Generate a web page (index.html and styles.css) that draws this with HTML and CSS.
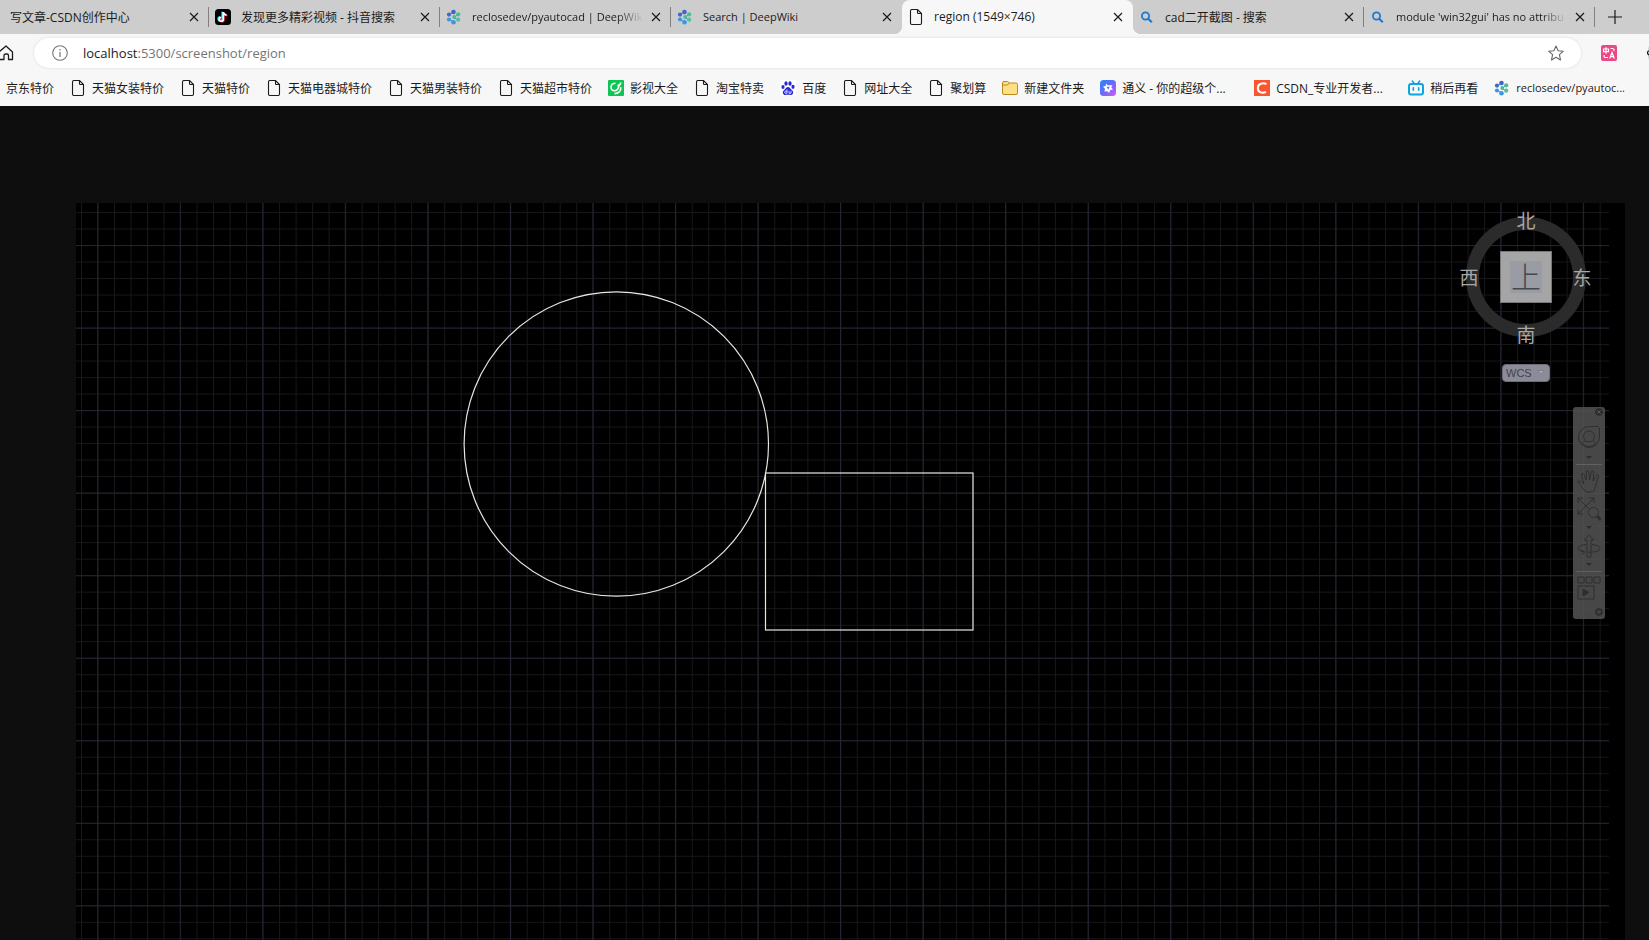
FILE: index.html
```
<!DOCTYPE html>
<html lang="zh-CN">
<head>
    <meta charset="UTF-8">
    <meta name="viewport" content="width=device-width, initial-scale=1.0">
    <title>region (1549×746)</title>
    <link rel="stylesheet" href="styles.css">
</head>
<body>

<!-- shared icons -->
<svg class="defs" width="0" height="0" aria-hidden="true">
    <symbol id="i-doc" viewBox="0 0 16 16">
        <path d="M4 .5h5.500l4 4v9.500a1.500 1.500 0 0 1-1.500 1.500H4A1.500 1.500 0 0 1 2.500 14V2A1.500 1.500 0 0 1 4 .5zM9.500.5v3.200a.8.800 0 0 0 .8.800h3.200" fill="none" stroke="#1b1b1b" stroke-width="1.100"/>
    </symbol>
    <symbol id="i-close" viewBox="0 0 10 10">
        <path d="M1 1l8 8M9 1l-8 8" stroke="#1b1b1b" stroke-width="1.200"/>
    </symbol>
    <symbol id="i-wiki" viewBox="0 0 16 16">
        <path d="M3.500 5.500l4-2.500M12 5.500l-4 3M4 11l4 2M12 11L8 8.500" stroke="#4a8fc8" stroke-width="1"/>
        <circle cx="7.500" cy="3" r="2.300" fill="#3f66c4"/>
        <circle cx="3" cy="5.600" r="2.100" fill="#4467c8"/>
        <circle cx="12.200" cy="5.300" r="2.100" fill="#4bbd92"/>
        <circle cx="8.200" cy="8" r="1.900" fill="#4db89c"/>
        <circle cx="3" cy="10.500" r="2.100" fill="#3f96dc"/>
        <circle cx="12.200" cy="10.700" r="2.100" fill="#57bfa0"/>
        <circle cx="7.500" cy="13.200" r="2.300" fill="#3f96dc"/>
    </symbol>
    <symbol id="i-search" viewBox="0 0 16 16">
        <circle cx="6.500" cy="7" r="3.600" fill="none" stroke="#1f78d1" stroke-width="1.800"/>
        <path d="M9.200 9.700l3.600 3.600" stroke="#1f78d1" stroke-width="2.200"/>
    </symbol>
</svg>

<header class="browser">
    <div class="tabs">
        <div class="tab tab-first">
            <span class="tab-title">写文章-CSDN创作中心</span>
            <button class="tab-close" aria-label="关闭"><svg><use href="#i-close"/></svg></button>
        </div>
        <div class="tab">
            <svg class="icon" viewBox="0 0 16 16">
                <rect width="16" height="16" rx="3.500" fill="#000"/>
                <path d="M7.700 3v7.200a2 2 0 1 1-2-2M7.700 3.200c.3 1.700 1.600 2.700 3.300 2.800" transform="translate(-.5 -.3)" fill="none" stroke="#25f4ee" stroke-width="1.600"/>
                <path d="M8.700 3v7.200a2 2 0 1 1-2-2M8.700 3.200c.3 1.700 1.600 2.700 3.300 2.800" transform="translate(.3 .6)" fill="none" stroke="#fe2c55" stroke-width="1.600"/>
                <path d="M8.300 3v7.200a2 2 0 1 1-2-2M8.300 3.200c.3 1.700 1.600 2.700 3.300 2.800" fill="none" stroke="#fff" stroke-width="1.600"/>
            </svg>
            <span class="tab-title">发现更多精彩视频 - 抖音搜索</span>
            <button class="tab-close" aria-label="关闭"><svg><use href="#i-close"/></svg></button>
        </div>
        <div class="tab">
            <svg class="icon"><use href="#i-wiki"/></svg>
            <span class="tab-title latin fade">reclosedev/pyautocad | DeepWiki</span>
            <button class="tab-close" aria-label="关闭"><svg><use href="#i-close"/></svg></button>
        </div>
        <div class="tab no-line">
            <svg class="icon"><use href="#i-wiki"/></svg>
            <span class="tab-title latin">Search | DeepWiki</span>
            <button class="tab-close" aria-label="关闭"><svg><use href="#i-close"/></svg></button>
        </div>
        <div class="tab active">
            <svg class="icon"><use href="#i-doc"/></svg>
            <span class="tab-title">region (1549×746)</span>
            <button class="tab-close" aria-label="关闭"><svg><use href="#i-close"/></svg></button>
        </div>
        <div class="tab">
            <svg class="icon"><use href="#i-search"/></svg>
            <span class="tab-title">cad二开截图 - 搜索</span>
            <button class="tab-close" aria-label="关闭"><svg><use href="#i-close"/></svg></button>
        </div>
        <div class="tab">
            <svg class="icon"><use href="#i-search"/></svg>
            <span class="tab-title latin fade">module 'win32gui' has no attribu</span>
            <button class="tab-close" aria-label="关闭"><svg><use href="#i-close"/></svg></button>
        </div>
        <button class="new-tab" aria-label="新建标签页">
            <svg viewBox="0 0 14 14"><path d="M7 0v14M0 7h14" stroke="#1b1b1b" stroke-width="1.200"/></svg>
        </button>
    </div>

    <div class="toolbar">
        <button class="home" aria-label="主页">
            <svg viewBox="0 0 14 16"><path d="M-1.500 7.500L6 1l6.500 6v7.500h-4v-4a1.500 1.500 0 0 0-1.500-1.500H5.500A1.500 1.500 0 0 0 4 10.500v4H-.5" fill="none" stroke="#1b1b1b" stroke-width="1.300" stroke-linejoin="round"/></svg>
        </button>
        <div class="address">
            <svg class="icon" viewBox="0 0 16 16">
                <circle cx="8" cy="8" r="7.300" fill="none" stroke="#757575" stroke-width="1.100"/>
                <path d="M8 7v5M8 4v1.500" stroke="#757575" stroke-width="1.200"/>
            </svg>
            <a class="url" href="#">localhost<span>:5300/screenshot/region</span></a>
            <button class="star" aria-label="收藏">
                <svg viewBox="0 0 16 16"><path d="M8 1l2.100 4.700 5.200.5-3.900 3.500 1.100 5.200L8 12.300l-4.500 2.600 1.100-5.200L.7 6.200l5.200-.5z" fill="none" stroke="#666" stroke-width="1.100" stroke-linejoin="round"/></svg>
            </button>
        </div>
        <button class="translate" aria-label="翻译">
            <svg viewBox="0 0 16 16">
                <rect width="16" height="16" rx="2" fill="#ec4786"/>
                <path d="M2.500 4h5v2.700h-5zM5 2.300v6.500M9.500 3.500h2a1.500 1.500 0 0 1 1.500 1.500v1M3 10v1a1.500 1.500 0 0 0 1.500 1.500H7M8.700 13.500l2.300-6 2.300 6M9.500 11.700h3" fill="none" stroke="#fff" stroke-width="1.200"/>
            </svg>
        </button>
        <button class="extensions" aria-label="扩展">
            <svg viewBox="0 0 16 16"><path d="M4.500 3h2.300a2 2 0 0 1 4 0H14v10H4.500V9.800a2 2 0 1 1 0-4z" fill="none" stroke="#1b1b1b" stroke-width="1.300"/></svg>
        </button>
    </div>

    <nav class="bookmarks">
        <a href="#">京东特价</a>
        <a href="#"><svg class="icon"><use href="#i-doc"/></svg>天猫女装特价</a>
        <a href="#"><svg class="icon"><use href="#i-doc"/></svg>天猫特价</a>
        <a href="#"><svg class="icon"><use href="#i-doc"/></svg>天猫电器城特价</a>
        <a href="#"><svg class="icon"><use href="#i-doc"/></svg>天猫男装特价</a>
        <a href="#"><svg class="icon"><use href="#i-doc"/></svg>天猫超市特价</a>
        <a href="#">
            <svg class="icon" viewBox="0 0 16 16">
                <rect width="16" height="16" rx="1" fill="#0cc552"/>
                <path d="M7.500 3.300C4.500 3.300 3 5 3 7.300s1.600 3.500 3.600 3.400c2.400-.1 3.700-2 4.400-4.700M12.800 7.200c.3 4-2.300 6.400-6.300 6.400M9.300 5.500c1.700.3 3-.8 3.700-3" fill="none" stroke="#fff" stroke-width="1.600"/>
            </svg>影视大全</a>
        <a href="#"><svg class="icon"><use href="#i-doc"/></svg>淘宝特卖</a>
        <a href="#">
            <svg class="icon" viewBox="0 0 16 16">
                <rect width="16" height="16" fill="#fff"/>
                <g fill="#2529d8">
                    <ellipse cx="3" cy="7" rx="1.600" ry="2.100"/>
                    <ellipse cx="6" cy="3.500" rx="1.600" ry="2.200"/>
                    <ellipse cx="10" cy="3.500" rx="1.600" ry="2.200"/>
                    <ellipse cx="13" cy="6.800" rx="1.600" ry="2.100"/>
                    <path d="M8 7c1.800 0 2.200 1.700 3.500 2.700 1.600 1.200 2 2.300 1.500 3.700-.8 2-3 1.400-5 1.400s-4.200.6-5-1.400c-.5-1.400-.1-2.500 1.500-3.700C5.800 8.700 6.200 7 8 7z"/>
                </g>
                <path d="M7 9.500v3.800H5.800a1 1 0 0 1 0-2.200H7M9 10.800v2.500h2v-2.500" fill="none" stroke="#fff" stroke-width=".8"/>
            </svg>百度</a>
        <a href="#"><svg class="icon"><use href="#i-doc"/></svg>网址大全</a>
        <a href="#"><svg class="icon"><use href="#i-doc"/></svg>聚划算</a>
        <a href="#">
            <svg class="icon" viewBox="0 0 16 16">
                <path d="M.5 3A1.500 1.500 0 0 1 2 1.500h3.500L7.500 3H14a1.500 1.500 0 0 1 1.500 1.500V13a1.500 1.500 0 0 1-1.500 1.500H2A1.500 1.500 0 0 1 .5 13z" fill="#ffdf86" stroke="#b98a1d"/>
                <path d="M.5 5h5l2-2" fill="none" stroke="#b98a1d"/>
            </svg>新建文件夹</a>
        <a href="#" class="wide">
            <svg class="icon" viewBox="0 0 16 16">
                <defs><linearGradient id="g-ty" x1="0" y1="0" x2="1" y2="1"><stop offset="0" stop-color="#1f8bfb"/><stop offset=".5" stop-color="#6a6af7"/><stop offset="1" stop-color="#d558f5"/></linearGradient></defs>
                <rect width="16" height="16" rx="3.500" fill="url(#g-ty)"/>
                <path d="M6.300 3.500l1.200 1.700h5l-1.200 2.300 1.700 2-2.700.5-1.300 3-1.700-1.800-3 .3.800-2.500L3 6.700l2.500-.7z" fill="#fff"/>
                <path d="M6.500 6.700h3.200L8.300 9.800z" fill="#6a6af7"/>
            </svg>通义 - 你的超级个...</a>
        <a href="#" class="wide">
            <svg class="icon" viewBox="0 0 16 16">
                <rect width="16" height="16" fill="#fc5531"/>
                <path d="M12.500 4.200C9 2.300 4 3.700 3.800 8.200c-.1 4.500 4.700 5.400 8.200 3.600" fill="none" stroke="#fff" stroke-width="2"/>
            </svg>CSDN_专业开发者...</a>
        <a href="#">
            <svg class="icon" viewBox="0 0 16 16">
                <path d="M4.300 1l2 2.500M11.700 1l-2 2.500" stroke="#0ea5df" stroke-width="1.600" stroke-linecap="round"/>
                <rect x="1" y="4" width="14" height="10.500" rx="2" fill="none" stroke="#0ea5df" stroke-width="2"/>
                <path d="M5.300 7.800v2.500M10.700 7.800v2.500" stroke="#0ea5df" stroke-width="1.600" stroke-linecap="round"/>
            </svg>稍后再看</a>
        <a href="#" class="wide latin"><svg class="icon"><use href="#i-wiki"/></svg>reclosedev/pyautoc...</a>
    </nav>
</header>

<main class="viewer">
    <div class="shot">
        <div class="grid">
            <svg width="100%" height="100%">
                <defs>
                    <pattern id="minor" x="5" y="9" width="16.507" height="16.507" patternUnits="userSpaceOnUse">
                        <path d="M.5 0v16.507M0 .5h16.507" stroke="#17171c"/>
                    </pattern>
                    <pattern id="major" x="21.200" y="42.100" width="82.535" height="82.535" patternUnits="userSpaceOnUse">
                        <path d="M.5 0v82.535M0 .5h82.535" stroke="#242433"/>
                    </pattern>
                </defs>
                <rect width="100%" height="100%" fill="url(#minor)"/>
                <rect width="100%" height="100%" fill="url(#major)"/>
                <g fill="none" stroke="#e6e6e2" stroke-width="1.200">
                    <circle cx="540.300" cy="241" r="152.200"/>
                    <rect x="689.500" y="270" width="207.500" height="157"/>
                </g>
            </svg>
        </div>

        <!-- view cube -->
        <svg class="cube" viewBox="0 0 154 150">
            <circle cx="77" cy="74" r="53.500" fill="none" stroke="#2b2b2b" stroke-width="13"/>
            <rect x="51.500" y="48.500" width="51" height="51" fill="#a5a5a5" stroke="#77797a"/>
            <rect x="61" y="58" width="32" height="32" fill="#999ca2"/>
            <text class="cube-face" x="77" y="85">上</text>
            <g class="cube-dir">
                <text x="77" y="25">北</text>
                <text x="20" y="82">西</text>
                <text x="133" y="82">东</text>
                <text x="77" y="139">南</text>
            </g>
        </svg>
        <button class="wcs">WCS
            <svg viewBox="0 0 8 5"><path d="M.5.5h7L4 4z" fill="#a9aab4" stroke="#737480" stroke-width=".7"/></svg>
        </button>

        <div class="navbar">
            <button class="nav-end" aria-label="关闭">
                <svg viewBox="0 0 8 8"><circle cx="4" cy="4" r="3.800" fill="#2c2c2c"/><path d="M2.300 2.300l3.400 3.400M5.700 2.300L2.300 5.700" stroke="#575757"/></svg>
            </button>
            <button class="nav-tool wheel" aria-label="控制盘">
                <svg viewBox="0 0 24 24"><path d="M12 1.500h9l1.500 1.500v9a10.500 10.500 0 1 1-10.500-10.500z"/><circle cx="12" cy="11.500" r="5.500"/><path d="M8 15.500l-3 3q7 6 14 0l-3-3"/></svg>
            </button>
            <button class="nav-drop" aria-label="更多"></button>
            <hr>
            <button class="nav-tool" aria-label="平移">
                <svg viewBox="0 0 24 24"><path d="M9 23C6 20 4 16 1 13.500c-1-1 .8-2 2.500-1L7 15 4.500 6c-.4-1.700 1.700-2.300 2.300-.7l2.700 6L9.300 3c0-1.800 2.400-1.800 2.600 0l.7 8L14.300 3c.4-1.700 2.600-1.200 2.400.4L16 12l3.500-5.500c1-1.300 2.600-.4 2 1L19 15c-.5 3-1.500 6-3 8z"/></svg>
            </button>
            <button class="nav-tool" aria-label="缩放">
                <svg viewBox="0 0 24 24"><path d="M1 6V1h5M12 1h5v5M1 12v5h5M1 1l16 16M17 1L1 17"/><circle cx="16.500" cy="15.500" r="5" fill="#484848"/><path d="M20 19l4 4" stroke-width="3"/></svg>
            </button>
            <button class="nav-drop" aria-label="更多"></button>
            <button class="nav-tool" aria-label="动态观察">
                <svg viewBox="0 0 24 24"><path d="M10 23V6H7.500L12 1l4.500 5H14v17z"/><path d="M9 10.500c-10 1-10 6-2 7.500M15 10.500c10 1 11 6.500 1 7.500l-5 .3M4 16l4 2-3 3"/></svg>
            </button>
            <button class="nav-drop" aria-label="更多"></button>
            <hr>
            <button class="nav-tool" aria-label="ShowMotion">
                <svg viewBox="0 0 24 24"><path d="M1 1h6v6H1zM9 1h6v6H9zM17 1h6v6h-6zM1 10h16v13H1z"/><path d="M6 13l6 3.500L6 20z" fill="#2c2c2c"/></svg>
            </button>
            <button class="nav-end bottom" aria-label="选项">
                <svg viewBox="0 0 8 8"><circle cx="4" cy="4" r="3.800" fill="#2c2c2c"/><path d="M2 3.200h4M2.500 5h3" stroke="#575757"/></svg>
            </button>
        </div>
    </div>
</main>

</body>
</html>
```
FILE: styles.css
```
* {
    box-sizing: border-box;
}

body {
    margin: 0;
    height: 100vh;
    display: flex;
    flex-direction: column;
    overflow: hidden;
    background: #0e0e0e;
    color: #1b1b1b;
    font-family: "Open Sans", "Noto Sans CJK SC", sans-serif;
    font-size: 12px;
}

button {
    padding: 0;
    border: none;
    background: none;
    font: inherit;
    color: inherit;
    cursor: pointer;
}

a {
    color: inherit;
    text-decoration: none;
}

svg {
    display: block;
}

.defs {
    position: absolute;
}

.icon {
    width: 16px;
    height: 16px;
    flex: none;
}

.latin {
    font-size: 11px;
}

.browser {
    background: #f7f7f7;
}

/* tabs */
.tabs {
    display: flex;
    height: 34px;
    background: #cdcdcd;
}

.tab {
    position: relative;
    flex: 0 1 231px;
    min-width: 0;
    display: flex;
    align-items: center;
    padding: 0 10px 1px 6px;
}

.tab-first {
    flex-basis: 209px;
    padding-left: 10px;
}

.tab-first .tab-title {
    margin-left: 0;
}

.tab::after {
    content: "";
    position: absolute;
    right: 0;
    top: 7px;
    width: 1px;
    height: 20px;
    background: #808080;
}

.tab.no-line::after {
    display: none;
}

.tab.active {
    background: #f7f7f7;
    border-radius: 8px 8px 0 0;
}

.tab.active::before,
.tab.active::after {
    content: "";
    position: absolute;
    top: auto;
    bottom: 0;
    width: 8px;
    height: 8px;
}

.tab.active::before {
    left: -8px;
    background: radial-gradient(circle at 0 0, #cdcdcd 8px, #f7f7f7 8px);
}

.tab.active::after {
    right: -8px;
    background: radial-gradient(circle at 100% 0, #cdcdcd 8px, #f7f7f7 8px);
}

.tab-title {
    flex: 1;
    min-width: 0;
    margin: 0 8px 0 10px;
    overflow: hidden;
    white-space: nowrap;
}

.tab-title.fade {
    -webkit-mask-image: linear-gradient(to right, #000 calc(100% - 26px), transparent);
    mask-image: linear-gradient(to right, #000 calc(100% - 26px), transparent);
}

.tab-close svg {
    width: 10px;
    height: 10px;
}

.new-tab {
    margin-left: 13px;
    padding-bottom: 1px;
}

.new-tab svg {
    width: 14px;
    height: 14px;
}

/* address bar */
.toolbar {
    display: flex;
    align-items: center;
    height: 38px;
    overflow: hidden;
}

.home svg {
    width: 14px;
    height: 16px;
}

.address {
    flex: 1;
    display: flex;
    align-items: center;
    height: 30px;
    margin: 0 20px;
    padding: 0 17px 0 18px;
    background: #fff;
    border-radius: 15px;
    box-shadow: 0 0 3px rgba(0, 0, 0, 0.12);
}

.url {
    flex: 1;
    margin-left: 15px;
    font-size: 13px;
}

.url span {
    color: #757575;
}

.star svg,
.translate svg {
    width: 16px;
    height: 16px;
}

.extensions {
    width: 4px;
    margin-left: 28px;
    overflow: hidden;
}

.extensions svg {
    width: 16px;
    height: 16px;
}

/* bookmarks */
.bookmarks {
    display: flex;
    align-items: center;
    gap: 16px;
    height: 34px;
    padding: 0 6px 3px;
    overflow: hidden;
    white-space: nowrap;
}

.bookmarks a {
    flex: none;
    display: flex;
    align-items: center;
    gap: 6px;
}

.bookmarks .wide {
    width: 138px;
}

/* image viewer */
.viewer {
    flex: 1;
    min-height: 0;
    display: flex;
    padding: 97px 24px 0 76px;
}

.shot {
    position: relative;
    flex: 1;
    min-width: 0;
    padding-right: 16px;
    background: #000;
}

.grid {
    height: 100%;
}

.cube {
    position: absolute;
    top: 0;
    right: 22px;
    width: 154px;
    height: 150px;
}

.cube text {
    text-anchor: middle;
}

.cube-dir {
    font-size: 19px;
    fill: #a8a8a8;
}

.cube-face {
    font-family: "Noto Sans CJK SC", sans-serif;
    font-size: 30px;
    font-weight: 300;
    fill: #45484c;
}

.wcs {
    position: absolute;
    top: 161px;
    right: 75px;
    display: flex;
    align-items: center;
    justify-content: space-between;
    width: 48px;
    height: 18px;
    padding: 0 4px 1px 3px;
    border: 1px solid #6d6e78;
    border-radius: 4px;
    background: #8b8c98;
    color: #42434b;
    font-family: "Liberation Sans", sans-serif;
    font-size: 11px;
}

.wcs svg {
    width: 8px;
    height: 5px;
}

.navbar {
    position: absolute;
    top: 204px;
    right: 20px;
    display: flex;
    flex-direction: column;
    align-items: center;
    width: 32px;
    padding-bottom: 2px;
    border-radius: 3px;
    background: rgba(84, 84, 84, 0.85);
}

.navbar hr {
    width: 26px;
    margin: 2px 0;
    border: none;
    border-top: 1px solid #606060;
}

.nav-end {
    align-self: flex-end;
    padding: 1px 2px 3px;
}

.nav-end.bottom {
    padding: 6px 2px 1px;
}

.nav-end svg {
    width: 8px;
    height: 8px;
}

.nav-tool {
    padding: 2px 0;
}

.nav-tool.wheel {
    padding: 6px 0 4px;
}

.nav-tool svg {
    width: 24px;
    height: 24px;
    fill: none;
    stroke: #2f2f2f;
    stroke-width: 1;
}

.nav-drop {
    width: 6px;
    height: 3px;
    margin: 3px 0;
    background: #2c2c2c;
    clip-path: polygon(0 0, 100% 0, 50% 100%);
}
```
